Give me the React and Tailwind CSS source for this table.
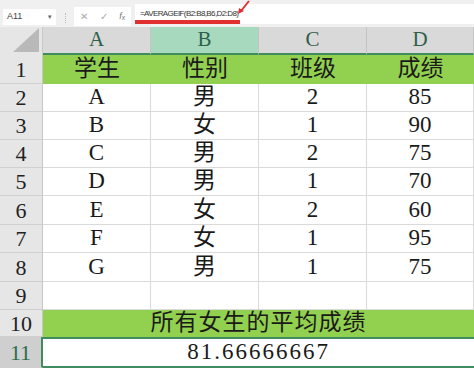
import React from 'react';

const serif = { fontFamily: '"Liberation Serif", "Noto Sans CJK SC", serif' };

const rows = [
  ['学生', '性别', '班级', '成绩'],
  ['A', '男', '2', '85'],
  ['B', '女', '1', '90'],
  ['C', '男', '2', '75'],
  ['D', '男', '1', '70'],
  ['E', '女', '2', '60'],
  ['F', '女', '1', '95'],
  ['G', '男', '1', '75'],
  ['', '', '', ''],
];

const heights = ['h-[29px]', 'h-[28px]', 'h-[28px]', 'h-[28px]', 'h-[28px]', 'h-[29px]', 'h-[28px]', 'h-[29px]', 'h-[28px]'];

function RowHead({ n, h, active }) {
  return (
    <div
      className={`${h} w-[43px] shrink-0 flex items-center justify-center text-[22px] border-b border-[#cfcfcf] ${
        active ? 'bg-[#cfcfcf] text-[#2b6e4c] border-r-2 border-r-[#3f8d5e]' : 'bg-[#e6e6e6] text-[#222] border-r border-r-[#c8c8c8]'
      }`}
      style={serif}
    >
      {n}
    </div>
  );
}

export default function App() {
  return (
    <div className="w-[474px] h-[368px] overflow-hidden bg-white select-none" style={{ fontFamily: '"Liberation Sans", Arial, sans-serif' }}>
      {/* formula bar */}
      <div className="h-[27px] bg-[#f0f0f0] flex items-start pt-[3px] relative">
        <div className="ml-[3px] mt-[6px] w-[53px] h-[16px] bg-white flex items-center justify-between px-[4px] text-[9px] text-[#444]">
          <span>A11</span>
          <span className="text-[7px] text-[#666]">▾</span>
        </div>
        <div className="ml-[9px] mt-[10px] h-[10px] border-l border-dotted border-[#bbb]" />
        <div className="ml-[8px] mt-[4px] w-[57px] h-[19px] bg-white flex items-center justify-around text-[10px] text-[#aaa]">
          <span>✕</span>
          <span>✓</span>
          <span className="italic text-[#777] text-[9px]">f<sub>x</sub></span>
        </div>
        <div className="ml-[4px] mt-[1px] flex-1 h-[20px] bg-white flex items-center pl-[5px] text-[8px] tracking-[-0.6px] text-[#333] relative">
          <span className="relative">=AVERAGEIF(B2:B8,B6,D2:D8)</span>
          <div className="absolute left-0 top-[16px] w-[105px] h-[4px] bg-[#e03030]" />
        </div>
        <svg className="absolute left-[236px] top-0" width="16" height="16" viewBox="0 0 16 16">
          <line x1="13" y1="1" x2="5" y2="11" stroke="#e03030" strokeWidth="2" />
          <polygon points="2,14 3,8 8,11" fill="#e03030" />
        </svg>
      </div>

      {/* column headers */}
      <div className="flex h-[28px]">
        <div className="w-[43px] shrink-0 bg-[#e6e6e6] relative border-r border-[#c8c8c8]">
          <svg className="absolute right-[3px] bottom-[3px]" width="26" height="24" viewBox="0 0 26 24">
            <polygon points="26,0 26,24 0,24" fill="#b9b9b9" />
          </svg>
        </div>
        {['A', 'B', 'C', 'D'].map((c, i) => (
          <div
            key={c}
            className={`${i === 3 ? 'flex-1' : 'w-[108px]'} flex items-center justify-center text-[21px] text-[#2f5f4a] border-r border-[#c4c4c4] border-b-2 border-b-[#3f8d5e] ${
              i === 1 ? 'bg-[#a7d9bf]' : 'bg-[#d9d9d9]'
            }`}
            style={serif}
          >
            {c}
          </div>
        ))}
      </div>

      {/* data rows */}
      {rows.map((r, ri) => (
        <div key={ri} className="flex">
          <RowHead n={ri + 1} h={heights[ri]} />
          {r.map((v, ci) => (
            <div
              key={ci}
              className={`${heights[ri]} ${ci === 3 ? 'flex-1' : 'w-[108px]'} flex items-center justify-center text-[23px] text-[#1a1a1a] ${
                ri === 0 ? 'bg-[#92d050] border-b border-[#92d050]' : 'bg-white border-b border-r border-[#dadada]'
              }`}
              style={serif}
            >
              {v}
            </div>
          ))}
        </div>
      ))}

      {/* row 10 */}
      <div className="flex">
        <RowHead n={10} h="h-[27px]" />
        <div className="h-[27px] flex-1 bg-[#92d050] flex items-center justify-center text-[23px] text-[#1a1a1a] tracking-[1px]" style={serif}>
          所有女生的平均成绩
        </div>
      </div>

      {/* row 11 */}
      <div className="flex">
        <RowHead n={11} h="h-[31px]" active />
        <div className="h-[31px] flex-1 bg-white border-y-2 border-[#3f8d5e] flex items-center justify-center text-[23px] text-[#1a1a1a] tracking-[2px]" style={serif}>
          81.66666667
        </div>
      </div>
    </div>
  );
}
